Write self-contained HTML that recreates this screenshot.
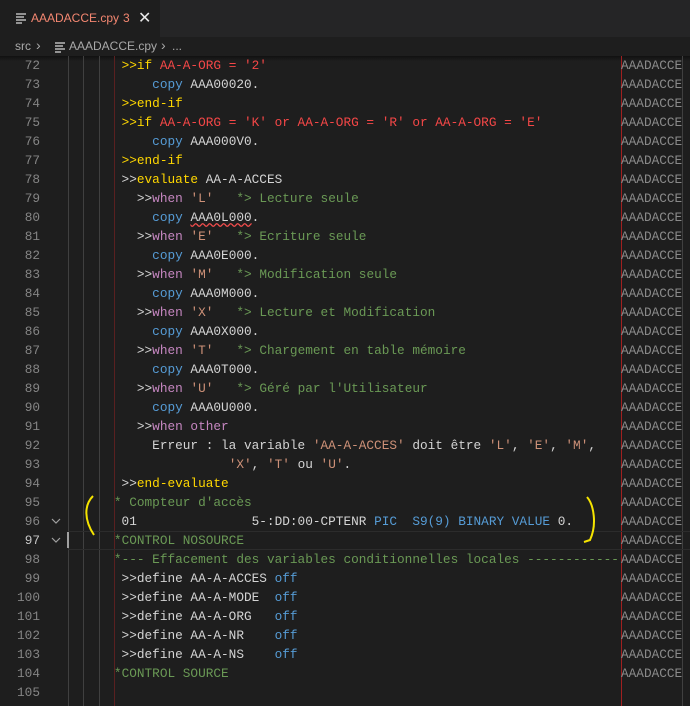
<!DOCTYPE html>
<html><head><meta charset="utf-8"><style>
body{margin:0;width:690px;height:706px;background:#1e1e1e;overflow:hidden;position:relative;font-family:"Liberation Sans",sans-serif}
.tabs{position:absolute;left:0;top:0;width:690px;height:37px;background:#252526}
.tab{position:absolute;left:0;top:0;width:160px;height:37px;background:#1e1e1e;color:#f48771;font-size:12px}
.crumb{position:absolute;left:0;top:37px;width:690px;height:20px;color:#a9a9a9;font-size:12px}
.code{position:absolute;left:0;top:56px;width:690px;font-family:"Liberation Mono",monospace;font-size:12.75px}
.row{position:absolute;left:0;height:19px;line-height:19px;width:690px}
.ln{position:absolute;right:650px;color:#858585;text-align:right}
.tx{position:absolute;left:68px;white-space:pre;color:#d4d4d4}
.sq{position:absolute;left:621px;color:#8a8a8a;white-space:pre}
.y{color:#ffd700}.r{color:#f44747}.b{color:#569cd6}.p{color:#c586c0}.g{color:#6a9955}.s{color:#ce9178}.w{color:#d4d4d4}
.vl{position:absolute;top:56px;height:650px;width:1px}
</style></head><body>
<div class="tabs"><div class="tab">
<svg style="position:absolute;left:16px;top:13px" width="12" height="11"><g stroke="#c5c5c5" stroke-width="1.4"><line x1="0" y1="1" x2="10" y2="1"/><line x1="0" y1="4" x2="8" y2="4"/><line x1="0" y1="7" x2="10" y2="7"/><line x1="0" y1="10" x2="6" y2="10"/></g></svg>
<span style="position:absolute;left:31px;top:11px">AAADACCE.cpy</span><span style="position:absolute;left:123px;top:11px">3</span>
<span style="position:absolute;left:138px;top:8px;color:#e8e8e8;font-size:16px">✕</span></div></div>
<div class="crumb"><span style="position:absolute;left:15px;top:2px">src</span><span style="position:absolute;left:36px;top:0px;font-size:14px">›</span>
<svg style="position:absolute;left:55px;top:5px" width="12" height="11"><g stroke="#c5c5c5" stroke-width="1.4"><line x1="0" y1="1" x2="10" y2="1"/><line x1="0" y1="4" x2="8" y2="4"/><line x1="0" y1="7" x2="10" y2="7"/><line x1="0" y1="10" x2="6" y2="10"/></g></svg>
<span style="position:absolute;left:69px;top:2px">AAADACCE.cpy</span><span style="position:absolute;left:161px;top:0;font-size:14px">›</span><span style="position:absolute;left:172px;top:2px">...</span></div>
<div style="position:absolute;left:0;top:56px;width:690px;height:5px;background:linear-gradient(#111,#1e1e1e)"></div>
<div class="vl" style="left:68px;background:#404040"></div>
<div class="vl" style="left:83px;background:#404040"></div>
<div class="vl" style="left:99px;background:#404040"></div>
<div class="vl" style="left:114px;background:#5a2020"></div>
<div class="vl" style="left:621px;background:#a02020"></div>
<div class="vl" style="left:682px;background:#404040"></div>
<div style="position:absolute;left:68px;top:531px;width:622px;height:17px;border-top:1px solid #2c2c2c;border-bottom:1px solid #2c2c2c"></div>
<div style="position:absolute;left:67px;top:532px;width:2px;height:16px;background:#a0a0a0"></div>
<div class="code">
<div class="row" style="top:0"><span class="ln">72</span><span class="tx">       <span class="y">&gt;&gt;if</span> <span class="r">AA-A-ORG = '2'</span></span><span class="sq">AAADACCE</span></div>
<div class="row" style="top:19px"><span class="ln">73</span><span class="tx">           <span class="b">copy</span> AAA00020.</span><span class="sq">AAADACCE</span></div>
<div class="row" style="top:38px"><span class="ln">74</span><span class="tx">       <span class="y">&gt;&gt;end-if</span></span><span class="sq">AAADACCE</span></div>
<div class="row" style="top:57px"><span class="ln">75</span><span class="tx">       <span class="y">&gt;&gt;if</span> <span class="r">AA-A-ORG = 'K' or AA-A-ORG = 'R' or AA-A-ORG = 'E'</span></span><span class="sq">AAADACCE</span></div>
<div class="row" style="top:76px"><span class="ln">76</span><span class="tx">           <span class="b">copy</span> AAA000V0.</span><span class="sq">AAADACCE</span></div>
<div class="row" style="top:95px"><span class="ln">77</span><span class="tx">       <span class="y">&gt;&gt;end-if</span></span><span class="sq">AAADACCE</span></div>
<div class="row" style="top:114px"><span class="ln">78</span><span class="tx">       &gt;&gt;<span class="y">evaluate</span> AA-A-ACCES</span><span class="sq">AAADACCE</span></div>
<div class="row" style="top:133px"><span class="ln">79</span><span class="tx">         &gt;&gt;<span class="p">when</span> <span class="s">'L'</span>   <span class="g">*&gt; Lecture seule</span></span><span class="sq">AAADACCE</span></div>
<div class="row" style="top:152px"><span class="ln">80</span><span class="tx">           <span class="b">copy</span> <span style="text-decoration:underline wavy #f14c4c">AAA0L000</span>.</span><span class="sq">AAADACCE</span></div>
<div class="row" style="top:171px"><span class="ln">81</span><span class="tx">         &gt;&gt;<span class="p">when</span> <span class="s">'E'</span>   <span class="g">*&gt; Ecriture seule</span></span><span class="sq">AAADACCE</span></div>
<div class="row" style="top:190px"><span class="ln">82</span><span class="tx">           <span class="b">copy</span> AAA0E000.</span><span class="sq">AAADACCE</span></div>
<div class="row" style="top:209px"><span class="ln">83</span><span class="tx">         &gt;&gt;<span class="p">when</span> <span class="s">'M'</span>   <span class="g">*&gt; Modification seule</span></span><span class="sq">AAADACCE</span></div>
<div class="row" style="top:228px"><span class="ln">84</span><span class="tx">           <span class="b">copy</span> AAA0M000.</span><span class="sq">AAADACCE</span></div>
<div class="row" style="top:247px"><span class="ln">85</span><span class="tx">         &gt;&gt;<span class="p">when</span> <span class="s">'X'</span>   <span class="g">*&gt; Lecture et Modification</span></span><span class="sq">AAADACCE</span></div>
<div class="row" style="top:266px"><span class="ln">86</span><span class="tx">           <span class="b">copy</span> AAA0X000.</span><span class="sq">AAADACCE</span></div>
<div class="row" style="top:285px"><span class="ln">87</span><span class="tx">         &gt;&gt;<span class="p">when</span> <span class="s">'T'</span>   <span class="g">*&gt; Chargement en table mémoire</span></span><span class="sq">AAADACCE</span></div>
<div class="row" style="top:304px"><span class="ln">88</span><span class="tx">           <span class="b">copy</span> AAA0T000.</span><span class="sq">AAADACCE</span></div>
<div class="row" style="top:323px"><span class="ln">89</span><span class="tx">         &gt;&gt;<span class="p">when</span> <span class="s">'U'</span>   <span class="g">*&gt; Géré par l'Utilisateur</span></span><span class="sq">AAADACCE</span></div>
<div class="row" style="top:342px"><span class="ln">90</span><span class="tx">           <span class="b">copy</span> AAA0U000.</span><span class="sq">AAADACCE</span></div>
<div class="row" style="top:361px"><span class="ln">91</span><span class="tx">         &gt;&gt;<span class="p">when other</span></span><span class="sq">AAADACCE</span></div>
<div class="row" style="top:380px"><span class="ln">92</span><span class="tx">           Erreur : la variable <span class="s">'AA-A-ACCES'</span> doit être <span class="s">'L'</span>, <span class="s">'E'</span>, <span class="s">'M'</span>,</span><span class="sq">AAADACCE</span></div>
<div class="row" style="top:399px"><span class="ln">93</span><span class="tx">                     <span class="s">'X'</span>, <span class="s">'T'</span> ou <span class="s">'U'</span>.</span><span class="sq">AAADACCE</span></div>
<div class="row" style="top:418px"><span class="ln">94</span><span class="tx">       &gt;&gt;<span class="y">end-evaluate</span></span><span class="sq">AAADACCE</span></div>
<div class="row" style="top:437px"><span class="ln">95</span><span class="tx">      <span class="g">* Compteur d'accès</span></span><span class="sq">AAADACCE</span></div>
<div class="row" style="top:456px"><span class="ln">96</span><span class="tx">       01               5-:DD:00-CPTENR <span class="b">PIC  S9(9) BINARY VALUE</span> 0.</span><span class="sq">AAADACCE</span></div>
<div class="row" style="top:475px"><span class="ln" style="color:#c6c6c6">97</span><span class="tx">      <span class="g">*CONTROL NOSOURCE</span></span><span class="sq">AAADACCE</span></div>
<div class="row" style="top:494px"><span class="ln">98</span><span class="tx">      <span class="g">*--- Effacement des variables conditionnelles locales ------------</span></span><span class="sq">AAADACCE</span></div>
<div class="row" style="top:513px"><span class="ln">99</span><span class="tx">       &gt;&gt;define AA-A-ACCES <span class="b">off</span></span><span class="sq">AAADACCE</span></div>
<div class="row" style="top:532px"><span class="ln">100</span><span class="tx">       &gt;&gt;define AA-A-MODE  <span class="b">off</span></span><span class="sq">AAADACCE</span></div>
<div class="row" style="top:551px"><span class="ln">101</span><span class="tx">       &gt;&gt;define AA-A-ORG   <span class="b">off</span></span><span class="sq">AAADACCE</span></div>
<div class="row" style="top:570px"><span class="ln">102</span><span class="tx">       &gt;&gt;define AA-A-NR    <span class="b">off</span></span><span class="sq">AAADACCE</span></div>
<div class="row" style="top:589px"><span class="ln">103</span><span class="tx">       &gt;&gt;define AA-A-NS    <span class="b">off</span></span><span class="sq">AAADACCE</span></div>
<div class="row" style="top:608px"><span class="ln">104</span><span class="tx">      <span class="g">*CONTROL SOURCE</span></span><span class="sq">AAADACCE</span></div>
<div class="row" style="top:627px"><span class="ln">105</span></div>
</div>
<svg style="position:absolute;left:0;top:0" width="690" height="706"><g stroke="#a0a0a0" stroke-width="1.2" fill="none"><path d="M52 519 l4 4 l4 -4"/><path d="M52 538 l4 4 l4 -4"/></g>
<g stroke="#f5e400" stroke-width="2" fill="none"><path d="M93 496 C84 505 84 520 94 535"/><path d="M587 497 C594 505 597 525 590 540 L584 542"/></g></svg>
</body></html>
